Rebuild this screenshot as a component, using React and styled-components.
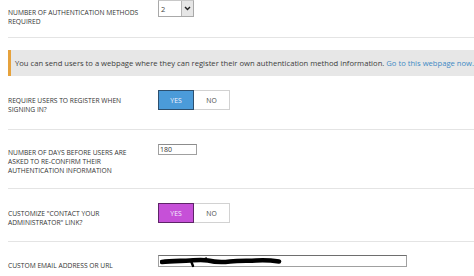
import styled, { createGlobalStyle } from "styled-components";

const GlobalStyle = createGlobalStyle`
  html, body {
    margin: 0;
    padding: 0;
    background: #ffffff;
    overflow: hidden;
  }
  body {
    font-family: "Open Sans", "Liberation Sans", sans-serif;
    color: #333333;
  }
`;

const Page = styled.div`
  width: 474px;
  height: 276px;
  padding-left: 8px;
  box-sizing: border-box;
  overflow: hidden;
`;

const Row = styled.div`
  display: flex;
  align-items: flex-start;
  padding: ${(p) => (p.$top !== undefined ? p.$top : 14)}px 0 ${(p) => (p.$bottom !== undefined ? p.$bottom : 14)}px;
  border-bottom: ${(p) => (p.$last ? "none" : "1px solid #e4e4e4")};
`;

const Label = styled.div`
  width: 140px;
  margin-right: 10px;
  margin-top: ${(p) => p.$offset || 6}px;
  font-size: 6.7px;
  line-height: 9px;
  text-transform: uppercase;
  color: #333333;
  flex-shrink: 0;
`;

const Select = styled.div`
  display: flex;
  width: 36px;
  height: 17px;
  box-sizing: border-box;
  border: 1px solid #a9a9a9;
  border-top-color: #c8c8c8;
  background: #fff;
  font-size: 7.5px;
  color: #444;
`;

const SelectValue = styled.span`
  flex: 1;
  padding: 3px 0 0 2px;
`;

const SelectArrow = styled.span`
  width: 11px;
  display: flex;
  align-items: center;
  justify-content: center;
  background: #e6e6e6;
  border-left: 1px solid #b5b5b5;
`;

const Info = styled.div`
  margin: 12px 0 0;
  height: 26px;
  display: flex;
  align-items: center;
  background: #e7e7e7;
  border-left: 3px solid #e6a23c;
  padding-left: 4px;
  font-size: 7.64px;
  color: #3c3c3c;
  white-space: nowrap;
  overflow: hidden;
`;

const Link = styled.span`
  color: #3e8ac4;
`;

const Toggle = styled.div`
  display: flex;
  height: 20px;
`;

const Option = styled.div`
  width: 36px;
  box-sizing: border-box;
  display: flex;
  align-items: center;
  justify-content: center;
  font-size: 6.8px;
  background: ${(p) => (p.$active ? p.$color : "#ffffff")};
  color: ${(p) => (p.$active ? "#f4f4ff" : "#4a4a4a")};
  border: 1px solid ${(p) => (p.$active ? p.$edge : "#d2d2d2")};
  border-left-width: ${(p) => (p.$active ? 1 : 0)}px;
`;

const TextInput = styled.div`
  position: relative;
  width: ${(p) => p.$width}px;
  height: ${(p) => p.$height || 11}px;
  box-sizing: border-box;
  border: 1px solid #a0a0a0;
  border-top-color: ${(p) => p.$dark || "#8c8c8c"};
  background: #fff;
  font-size: 7px;
  line-height: 9px;
  padding-left: 1px;
  color: #333;
`;

const Scribble = styled.svg`
  position: absolute;
  left: 1px;
  top: 0;
`;

const YesNo = ({ color, edge }) => (
  <Toggle>
    <Option $active $color={color} $edge={edge}>YES</Option>
    <Option>NO</Option>
  </Toggle>
);

const App = () => {
  return (
    <>
      <GlobalStyle />
      <Page>
        <Row $top={0} $bottom={11}>
          <Label $offset={8}>Number of authentication methods required</Label>
          <Select>
            <SelectValue>2</SelectValue>
            <SelectArrow>
              <svg width="7" height="5" viewBox="0 0 7 5">
                <path d="M1 1 L3.5 3.6 L6 1" fill="none" stroke="#222" strokeWidth="1.4" />
              </svg>
            </SelectArrow>
          </Select>
        </Row>

        <Info>
          You can send users to a webpage where they can register their own authentication method information.&nbsp;
          <Link>Go to this webpage now.</Link>
        </Info>

        <Row $bottom={15}>
          <Label $offset={6}>Require users to register when signing in?</Label>
          <YesNo color="#4b9bd9" edge="#2d4f6e" />
        </Row>

        <Row $bottom={13}>
          <Label $offset={4}>Number of days before users are asked to re-confirm their authentication information</Label>
          <TextInput $width={39}>180</TextInput>
        </Row>

        <Row>
          <Label $offset={6}>Customize "contact your administrator" link?</Label>
          <YesNo color="#c650d8" edge="#5e2468" />
        </Row>

        <Row $top={13} $last>
          <Label $offset={6}>Custom email address or URL</Label>
          <TextInput $width={249} $height={12} $dark="#6e6e6e">
            <Scribble width="130" height="12" viewBox="0 0 130 12">
              <path
                d="M2 6 C10 5 20 5 30 4.5 C38 4 42 3.5 48 4.5 C56 6.5 62 6.5 70 5.5 C80 4.5 88 5 96 4.5 C104 4 112 4.5 119 5.5"
                fill="none"
                stroke="#000"
                strokeWidth="4.6"
                strokeLinecap="round"
              />
              <path d="M31 5 L33 10 M42 4 L46 2.5" fill="none" stroke="#000" strokeWidth="2.4" strokeLinecap="round" />
            </Scribble>
          </TextInput>
        </Row>
      </Page>
    </>
  );
};

export default App;
